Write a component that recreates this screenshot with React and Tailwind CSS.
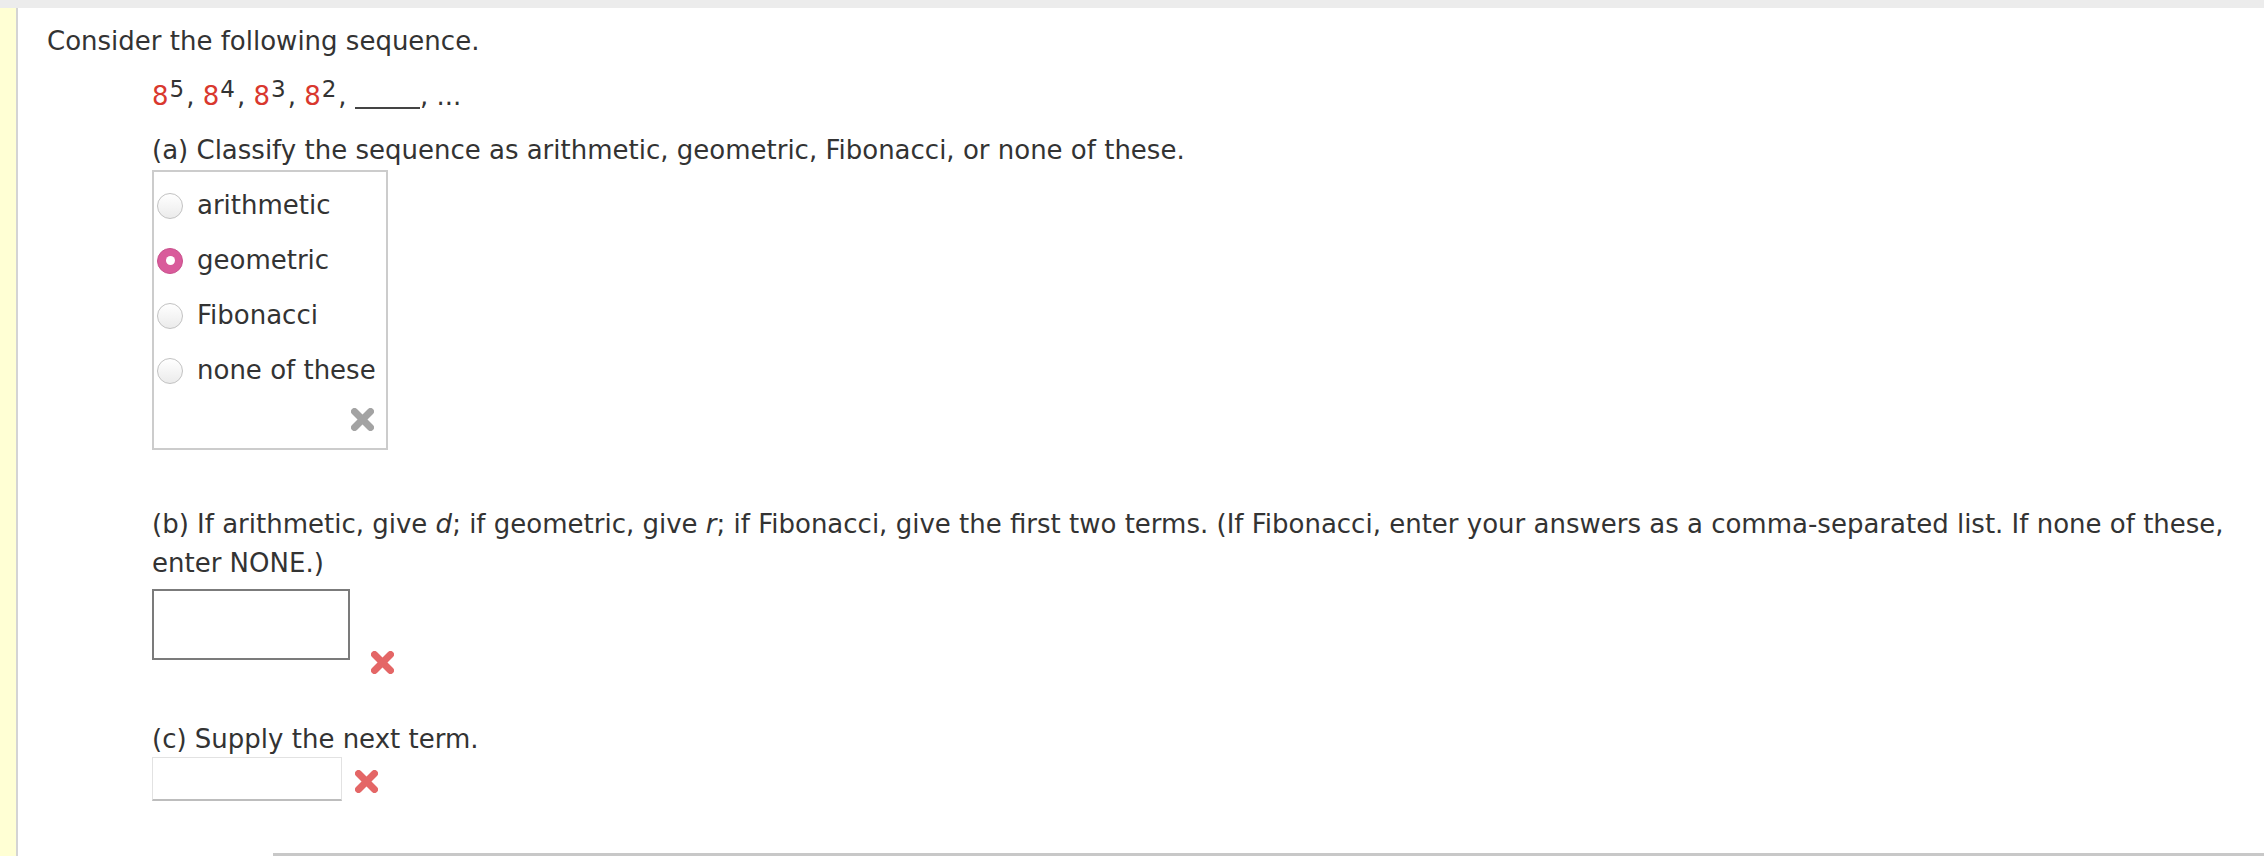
import React from "react";

function XIcon({ color, className }) {
  return (
    <svg width="27" height="27" viewBox="0 0 27 27" className={className}>
      <g stroke={color} strokeWidth="7" strokeLinecap="round" opacity="0.92">
        <line x1="5.5" y1="5.5" x2="21.5" y2="21.5" />
        <line x1="21.5" y1="5.5" x2="5.5" y2="21.5" />
      </g>
    </svg>
  );
}

function Radio({ selected, label }) {
  return (
    <div className="flex h-[55px] items-center pl-[3px]">
      {selected ? (
        <span className="flex h-[26px] w-[26px] items-center justify-center rounded-full border border-[#c9508c] bg-[#d95b9b]">
          <span className="h-[9px] w-[9px] rounded-full bg-white" />
        </span>
      ) : (
        <span className="h-[26px] w-[26px] rounded-full border border-[#c2c2c2] bg-linear-to-b from-white to-[#ebebeb]" />
      )}
      <span className="ml-[14px]">{label}</span>
    </div>
  );
}

function Pow({ k }) {
  return (
    <>
      <span className="text-[#d9382e]">8</span>
      <span className="relative top-[-8px] ml-[1px] mr-[2px] text-[23px]">{k}</span>
    </>
  );
}

export default function App() {
  return (
    <div className="flex h-[856px] w-[2264px] flex-col overflow-hidden bg-white font-['DejaVu_Sans',Verdana,sans-serif] text-[26px] leading-[39px] text-[#333333]">
      <div className="h-[8px] bg-[#ececec]" />
      <div className="flex flex-1">
        <div className="w-[18px] border-r-2 border-[#d4d4d4] bg-[#ffffd4]" />
        <div className="flex flex-1 flex-col">
          <div className="pl-[29px] pt-[14px]">Consider the following sequence.</div>
          <div className="ml-[134px] flex flex-col">
            <div className="mt-[16px] whitespace-nowrap">
              <Pow k="5" />, <Pow k="4" />, <Pow k="3" />, <Pow k="2" />,{" "}
              <span className="mb-[-4px] inline-block w-[65px] border-b-2 border-[#444444]" />, ...
            </div>
            <div className="mt-[14px]">
              (a) Classify the sequence as arithmetic, geometric, Fibonacci, or none of these.
            </div>
            <div className="flex h-[280px] w-[236px] flex-col border-2 border-[#cccccc] pt-[6px]">
              <Radio label="arithmetic" />
              <Radio selected label="geometric" />
              <Radio label="Fibonacci" />
              <Radio label="none of these" />
              <div className="mt-[8px] flex justify-end pr-[10px]">
                <XIcon color="#9c9c9c" />
              </div>
            </div>
            <div className="mt-[55px]">
              (b) If arithmetic, give <i>d</i>; if geometric, give <i>r</i>; if Fibonacci, give the first two terms. (If
              Fibonacci, enter your answers as a comma-separated list. If none of these, enter NONE.)
            </div>
            <div className="mt-[6px] flex items-start">
              <div className="h-[71px] w-[198px] border-2 border-[#7b7b7b] bg-white" />
              <XIcon color="#e25a5a" className="ml-[19px] mt-[60px]" />
            </div>
            <div className="mt-[45px] leading-[36px]">(c) Supply the next term.</div>
            <div className="flex items-start">
              <div className="h-[44px] w-[190px] border border-b-2 border-[#e2e2e2] border-b-[#bdbdbd] bg-white" />
              <XIcon color="#e25a5a" className="ml-[11px] mt-[11px]" />
            </div>
          </div>
          <div className="mt-auto ml-[255px] h-[3px] bg-[#c8c8c8]" />
        </div>
      </div>
    </div>
  );
}
